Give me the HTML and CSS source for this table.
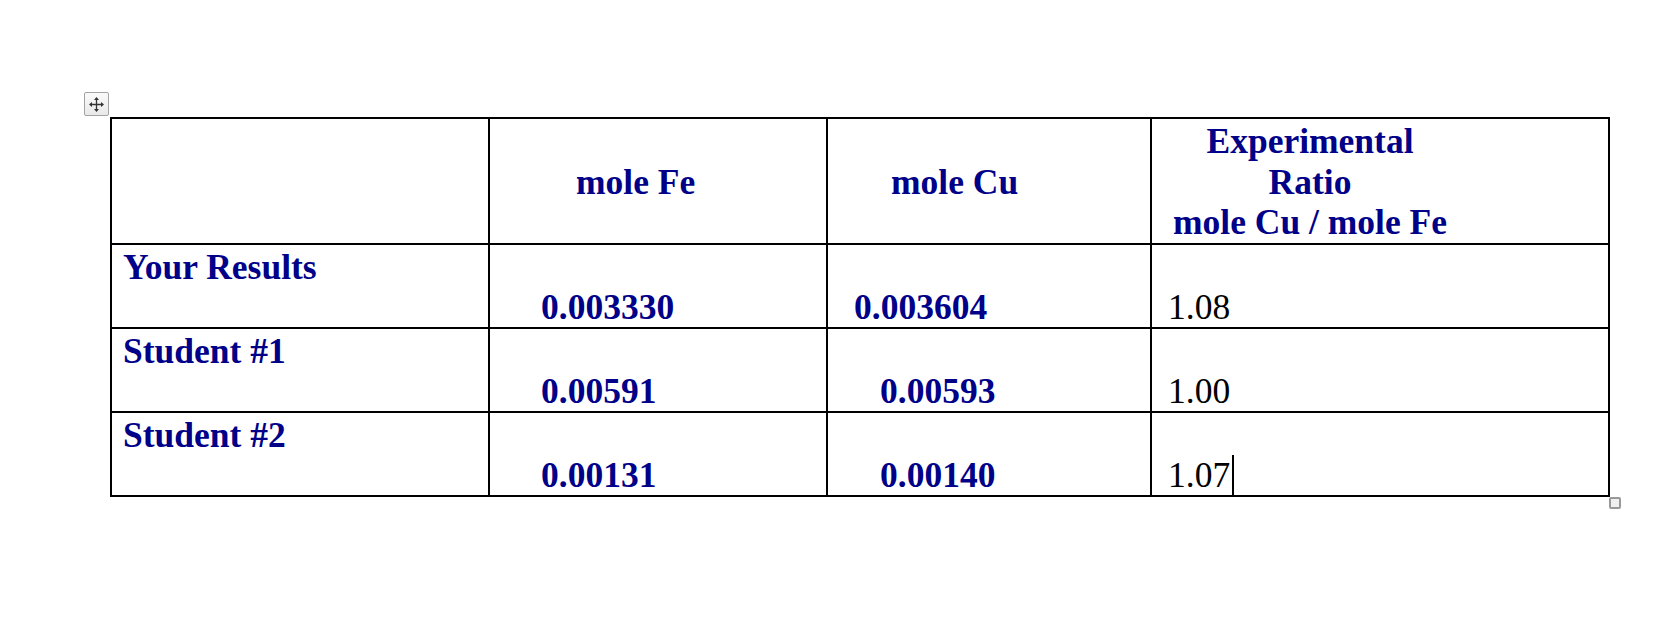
FILE: index.html
```html
<!DOCTYPE html>
<html lang="en">
<head>
    <meta charset="UTF-8">
    <title>Mole Ratio Table</title>
    <link rel="stylesheet" href="styles.css">
</head>
<body>

    <!-- document page -->
    <div class="page">
        <div class="table-wrap">

            <!-- word table move handle -->
            <div class="move-handle">
                <svg width="15" height="15" viewBox="0 0 15 15">
                    <path d="M7.5 1.5v12M1.5 7.5h12" stroke="#333" stroke-width="1.3" fill="none"/>
                    <path d="M7.5 0L5 3h5zM7.5 15L5 12h5zM0 7.5L3 5v5zM15 7.5L12 5v5z" fill="#333"/>
                </svg>
            </div>

            <table class="results">
                <colgroup>
                    <col class="c-label">
                    <col class="c-fe">
                    <col class="c-cu">
                    <col class="c-ratio">
                </colgroup>
                <tr class="head">
                    <th></th>
                    <th class="fe"><span>mole Fe</span></th>
                    <th class="cu"><span>mole Cu</span></th>
                    <th class="ratio">Experimental<br>Ratio<br>mole Cu / mole Fe</th>
                </tr>
                <tr>
                    <td class="label">Your Results</td>
                    <td class="val fe">0.003330</td>
                    <td class="val cu wide">0.003604</td>
                    <td class="val num">1.08</td>
                </tr>
                <tr>
                    <td class="label">Student #1</td>
                    <td class="val fe">0.00591</td>
                    <td class="val cu">0.00593</td>
                    <td class="val num">1.00</td>
                </tr>
                <tr>
                    <td class="label">Student #2</td>
                    <td class="val fe">0.00131</td>
                    <td class="val cu">0.00140</td>
                    <td class="val num">1.07<span class="caret"></span></td>
                </tr>
            </table>

            <!-- word table resize handle -->
            <div class="table-foot">
                <div class="resize-handle"></div>
            </div>
        </div>
    </div>

</body>
</html>
```

FILE: styles.css
```css
*{
    margin: 0;
    padding: 0;
    box-sizing: border-box;
}
html, body{
    min-height: 622px;
}
body{
    background: #fff;
    font-family: "Liberation Serif", "Times New Roman", serif;
}
.page{
    padding: 117px 0 0 110px;
}
.table-wrap{
    position: relative;
    width: 1498px;
}
.move-handle{
    position: absolute;
    left: -26px;
    top: -25px;
    width: 25px;
    height: 24px;
    border: 1px solid #a3a3a3;
    border-radius: 2px;
    background: linear-gradient(#fafafa, #e9e9e9);
    display: flex;
    align-items: center;
    justify-content: center;
}
.table-foot{
    display: flex;
    justify-content: flex-end;
    margin-right: -13px;
}
.resize-handle{
    width: 12px;
    height: 12px;
    border: 2px solid #999;
    border-radius: 2px;
    background: #f0f0f0;
}
.results{
    width: 1498px;
    border-collapse: collapse;
    table-layout: fixed;
    font-size: 35.5px;
    color: #000088;
}
.c-label{ width: 378px; }
.c-fe{ width: 338px; }
.c-cu{ width: 324px; }
.c-ratio{ width: 458px; }

.results th,
.results td{
    border: 2px solid #000;
    vertical-align: top;
    text-align: left;
    padding-top: 2px;
    line-height: 40px;
    font-weight: bold;
    white-space: nowrap;
}
.head th{
    line-height: 40.5px;
}
.head th span{
    display: block;
    padding-top: 40.5px;
}
.head .fe{
    padding-left: 86px;
}
.head .cu{
    padding-left: 63px;
}
.head .ratio{
    text-align: center;
    padding-left: 0;
    padding-right: 140px;
}
.label{
    padding-left: 11px;
}
.val{
    padding-top: 42px !important;
}
.val.fe{
    padding-left: 51px;
}
.val.cu{
    padding-left: 52px;
}
.val.cu.wide{
    padding-left: 26px;
}
.val.num{
    font-weight: normal;
    color: #000;
    padding-left: 16px;
}
.caret{
    display: inline-block;
    width: 1.5px;
    height: 40px;
    margin-left: 2px;
    background: #000;
    vertical-align: top;
}
```
